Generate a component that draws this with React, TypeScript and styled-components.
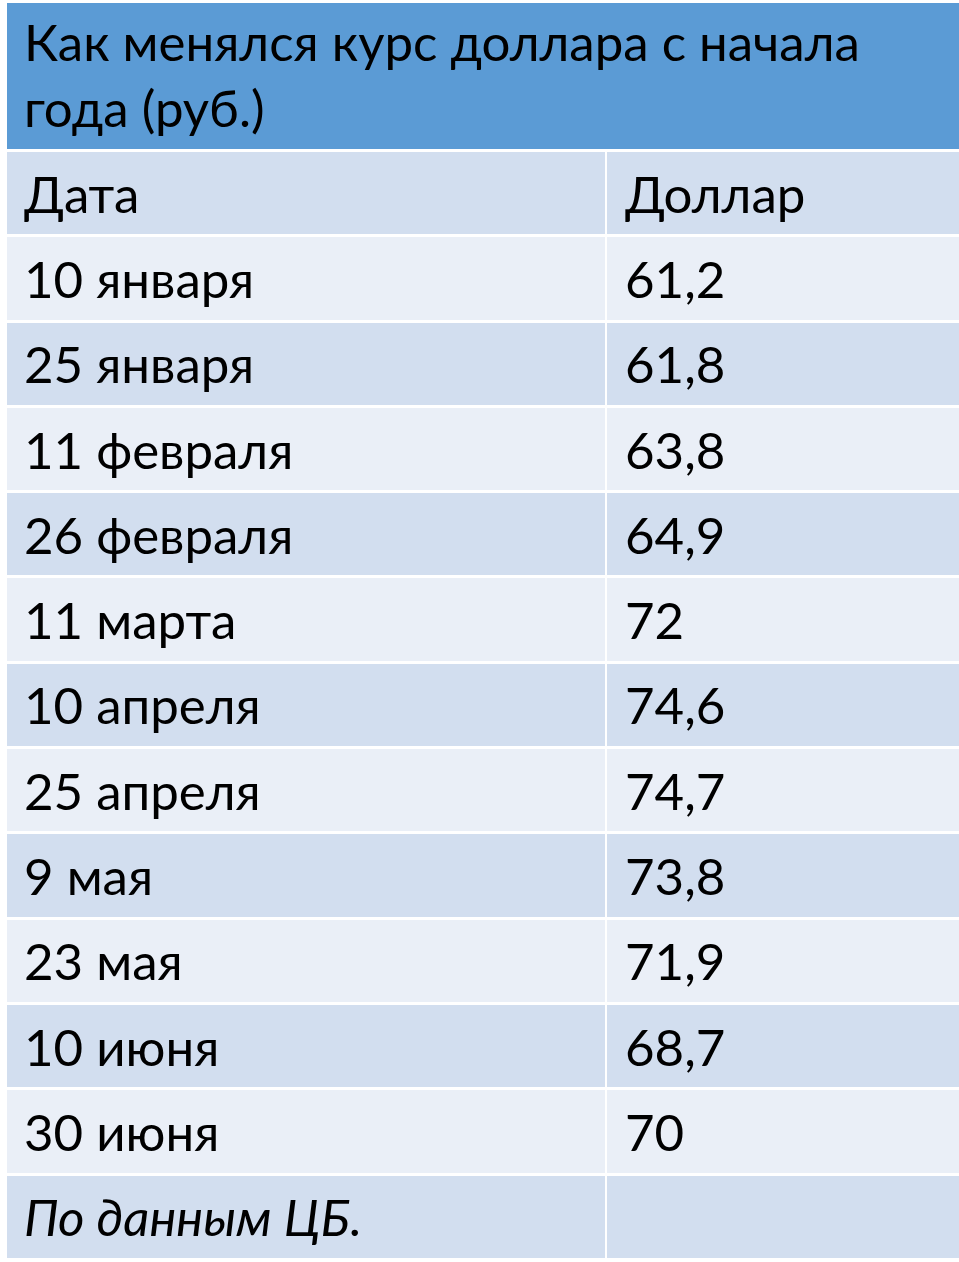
import React from "react";
import styled, { createGlobalStyle } from "styled-components";

const Global = createGlobalStyle`
  html, body { margin: 0; padding: 0; background: #ffffff; }
  body { font-family: Lato, "Open Sans", sans-serif; color: #000; }
`;

const Page = styled.div`
  padding: 3px 0 0 7px;
  width: 952px;
  overflow: hidden;
`;

const Header = styled.div`
  background: #5b9bd5;
  height: 146px;
  box-sizing: border-box;
  padding: 6px 0 0 17px;
  font-size: 51px;
  line-height: 66px;
`;

const Grid = styled.div`
  display: grid;
  grid-template-columns: 598px 1fr;
  column-gap: 2px;
  row-gap: 3px;
  margin-top: 3px;
  grid-auto-rows: 82.3px;
`;

const Cell = styled.div<{ $dark: boolean; $italic?: boolean; $right?: boolean }>`
  background: ${(p) => (p.$dark ? "#d2deef" : "#eaeff7")};
  display: flex;
  align-items: center;
  padding-left: ${(p) => (p.$right ? "18px" : "17px")};
  font-size: 51px;
  font-style: ${(p) => (p.$italic ? "italic" : "normal")};
  white-space: nowrap;
`;

const rows: [string, string][] = [
  ["Дата", "Доллар"],
  ["10 января", "61,2"],
  ["25 января", "61,8"],
  ["11 февраля", "63,8"],
  ["26 февраля", "64,9"],
  ["11 марта", "72"],
  ["10 апреля", "74,6"],
  ["25 апреля", "74,7"],
  ["9 мая", "73,8"],
  ["23 мая", "71,9"],
  ["10 июня", "68,7"],
  ["30 июня", "70"],
];

export default function App() {
  return (
    <Page>
      <Global />
      <Header>Как менялся курс доллара с начала года (руб.)</Header>
      <Grid>
        {rows.map(([d, v], i) => (
          <React.Fragment key={i}>
            <Cell $dark={i % 2 === 0}>{d}</Cell>
            <Cell $dark={i % 2 === 0} $right>{v}</Cell>
          </React.Fragment>
        ))}
        <Cell $dark $italic>По данным ЦБ.</Cell>
        <Cell $dark $right />
      </Grid>
    </Page>
  );
}
